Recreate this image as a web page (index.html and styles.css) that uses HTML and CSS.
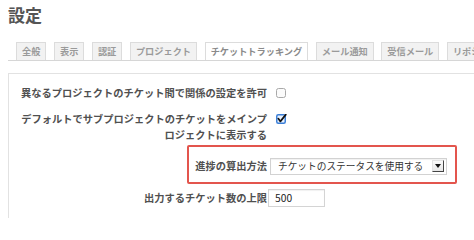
FILE: index.html
```html
<!DOCTYPE html>
<html lang="ja">
<head>
<meta charset="utf-8">
<title>設定</title>
<link rel="stylesheet" href="styles.css">
</head>
<body>
<h2 class="title">設定</h2>
<ul class="tabs">
  <li><a class="tab">全般</a></li>
  <li><a class="tab">表示</a></li>
  <li><a class="tab">認証</a></li>
  <li><a class="tab">プロジェクト</a></li>
  <li><a class="tab active">チケットトラッキング</a></li>
  <li><a class="tab">メール通知</a></li>
  <li><a class="tab">受信メール</a></li>
  <li><a class="tab">リポジトリ</a></li>
</ul>
<div class="box">
  <div class="row row-check">
    <label class="lbl">異なるプロジェクトのチケット間で関係の設定を許可</label>
    <span class="cb">
      <svg width="10" height="10" viewBox="0 0 10 10"><rect x="0.5" y="0.5" width="9" height="9" rx="2" fill="#fbfbfb" stroke="#a9a9a9"/></svg>
    </span>
  </div>
  <div class="row row-check">
    <label class="lbl">デフォルトでサブプロジェクトのチケットをメインプロジェクトに表示する</label>
    <span class="cb">
      <svg width="11" height="10" viewBox="0 0 11 10"><rect x="0.75" y="0.75" width="8.5" height="8.5" rx="1.5" fill="#eaf2fd" stroke="#3b7fd8" stroke-width="1.5"/><path d="M2.3 4.6 L4.4 7.4 L9.8 0.6" fill="none" stroke="#111" stroke-width="1.7" stroke-linecap="round" stroke-linejoin="round"/></svg>
    </span>
  </div>
  <div class="row row-field row-hl">
    <label class="lbl">進捗の算出方法</label>
    <div class="select">
      <span class="select-text">チケットのステータスを使用する</span>
      <span class="arrow"><svg width="6" height="4" viewBox="0 0 6 4"><path d="M0 0 H6 L3 4 Z" fill="#111"/></svg></span>
    </div>
    <span class="highlight"></span>
  </div>
  <div class="row row-field">
    <label class="lbl">出力するチケット数の上限</label>
    <div class="text">500</div>
  </div>
</div>
</body>
</html>
```

FILE: styles.css
```css
html, body {
  margin: 0;
}
html {
  height: 218px;
  overflow: hidden;
}
body {
  height: 213px;
  overflow: hidden;
  padding: 5px 0 0 8px;
  font-family: "Noto Sans CJK JP", "Liberation Sans", sans-serif;
  background: #fff;
  color: #444;
}
.title {
  margin: 0;
  font-size: 17px;
  line-height: 20px;
  font-weight: 700;
  color: #555;
}
.tabs {
  list-style: none;
  margin: 17px 0 0;
  padding: 0 0 0 8px;
  display: flex;
  align-items: flex-end;
  gap: 7.6px;
  border-bottom: 1px solid #d6d6d6;
  overflow: hidden;
}
.tabs li {
  flex: none;
}
.tab {
  display: block;
  padding: 0 5px;
  height: 17px;
  line-height: 17px;
  font-size: 9.2px;
  font-weight: 700;
  color: #9a9a9a;
  background: #f2f2f2;
  border: 1px solid #dcdcdc;
  border-bottom: none;
  white-space: nowrap;
}
.tab.active {
  background: #fff;
  color: #8a8a8a;
  height: 18px;
  margin-bottom: -1px;
}
.box {
  margin-top: 12px;
  height: 133px;
  border: 1px solid #e2e2e2;
  border-right: none;
  border-bottom: none;
  padding: 11px 0 0 11px;
  display: flex;
  flex-direction: column;
  gap: 10px;
}
.row {
  display: grid;
  grid-template-columns: 247px auto;
  justify-content: start;
}
.row-check {
  align-items: start;
}
.row-field {
  align-items: center;
  min-height: 22px;
}
.row-hl {
  position: relative;
  margin-top: 2px;
}
.lbl {
  font-size: 10.25px;
  line-height: 16px;
  font-weight: 700;
  color: #505050;
  text-align: right;
}
.cb {
  margin: 3px 0 0 9px;
  display: block;
  height: 10px;
  line-height: 0;
}
.select {
  margin-left: 3px;
  width: 177px;
  height: 17px;
  box-sizing: border-box;
  display: flex;
  align-items: center;
  justify-content: space-between;
  padding: 0 2px 0 7px;
  border: 1px solid #d2d2d2;
  background: #fff;
  box-shadow: inset 0 1px 1px rgba(0,0,0,0.06);
}
.select-text {
  font-size: 9.7px;
  line-height: 15px;
  color: #333;
  white-space: nowrap;
}
.arrow {
  width: 10px;
  height: 10px;
  display: flex;
  align-items: center;
  justify-content: center;
  background: linear-gradient(#fafafa, #e6e6e6);
  border-top: 1px solid #e2e2e2;
  border-left: 1px solid #e2e2e2;
  border-right: 1px solid #444;
  border-bottom: 1px solid #444;
}
.highlight {
  position: absolute;
  left: 167px;
  top: -10px;
  width: 266px;
  height: 35px;
  border: 2px solid #e3554d;
  border-radius: 2px;
  pointer-events: none;
}
.text {
  margin: 0 0 0 1px;
  width: 57px;
  height: 18px;
  box-sizing: border-box;
  border: 1px solid #d4d4d4;
  box-shadow: inset 0 1px 1px rgba(0,0,0,0.06);
  padding: 0 0 0 6px;
  font-size: 10.25px;
  line-height: 16px;
  color: #222;
}
```
